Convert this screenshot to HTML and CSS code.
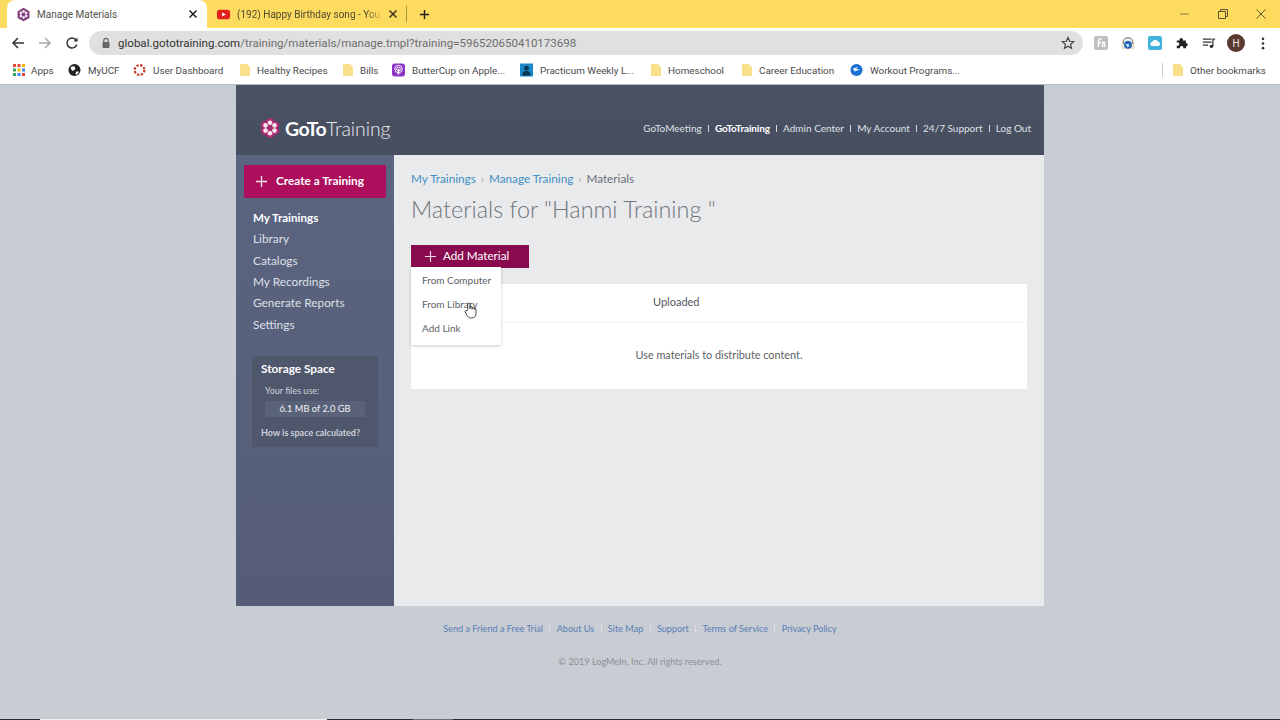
FILE: index.html
```html
<!DOCTYPE html>
<html lang="en">
<head>
<meta charset="utf-8">
<title>Manage Materials</title>
<link rel="stylesheet" href="styles.css">
</head>
<body>
<header class="chrome">
  <div class="tabstrip">
    <div class="tab tab-active">
      <svg class="favicon" viewBox="0 0 16 16"><path d="M8 .8 14.300 4.400V11.600L8 15.200 1.700 11.600V4.400Z" fill="#7d3a79"/><g fill="#f2e4f0"><circle cx="8" cy="4.800" r="1.500"/><circle cx="8" cy="11.200" r="1.500"/><circle cx="5.200" cy="6.400" r="1.500"/><circle cx="10.800" cy="6.400" r="1.500"/><circle cx="5.200" cy="9.600" r="1.500"/><circle cx="10.800" cy="9.600" r="1.500"/></g></svg>
      <span class="tab-title">Manage Materials</span>
      <svg class="tab-x" viewBox="0 0 10 10"><path d="M1.500 1.500 8.500 8.500M8.500 1.500 1.500 8.500" stroke="#222" stroke-width="1.500"/></svg>
    </div>
    <div class="tab tab-idle">
      <svg class="favicon" viewBox="0 0 16 16"><rect x="1" y="3" width="14" height="10" rx="3" fill="#e3211c"/><path d="M6.500 5.800 10.500 8 6.500 10.200Z" fill="#fff"/></svg>
      <span class="tab-title">(192) Happy Birthday song - You</span>
      <svg class="tab-x" viewBox="0 0 10 10"><path d="M1.500 1.500 8.500 8.500M8.500 1.500 1.500 8.500" stroke="#3a3420" stroke-width="1.500"/></svg>
    </div>
    <span class="tab-sep"></span>
    <svg class="tab-new" viewBox="0 0 12 12"><path d="M6 1V11M1 6H11" stroke="#26221a" stroke-width="1.600"/></svg>
    <div class="win-controls">
      <svg viewBox="0 0 12 12"><path d="M1 6H10" stroke="#8a7a45" stroke-width="1"/></svg>
      <svg viewBox="0 0 12 12"><path d="M1.500 3.500H8.500V10.500H1.500ZM3.500 3.500V1.500H10.500V8.500H8.500" fill="none" stroke="#5d5330" stroke-width="1"/></svg>
      <svg viewBox="0 0 12 12"><path d="M1.500 1.500 10.500 10.500M10.500 1.500 1.500 10.500" stroke="#5d5330" stroke-width="1"/></svg>
    </div>
  </div>
  <div class="toolbar">
    <svg class="nav-ico" viewBox="0 0 14 14"><path d="M13 7H2M7 2 2 7l5 5" fill="none" stroke="#333" stroke-width="1.500"/></svg>
    <svg class="nav-ico" viewBox="0 0 14 14"><path d="M1 7H12M7 2l5 5-5 5" fill="none" stroke="#aaa" stroke-width="1.500"/></svg>
    <svg class="nav-ico" viewBox="0 0 14 14"><path d="M11.800 8.500A5 5 0 1 1 10.500 3.400L12 5" fill="none" stroke="#333" stroke-width="1.500"/><path d="M12.500 1.500V5.500H8.500Z" fill="#333"/></svg>
    <div class="omnibox">
      <svg class="lock" viewBox="0 0 10 12"><path d="M2.800 5V3.500a2.200 2.200 0 0 1 4.400 0V5" fill="none" stroke="#666" stroke-width="1.200"/><rect x="1.500" y="5" width="7" height="6" rx="1" fill="#666"/></svg>
      <span class="url"><span class="url-host">global.gototraining.com</span>/training/materials/manage.tmpl?training=596520650410173698</span>
      <svg class="star" viewBox="0 0 14 14"><path d="M7 1.500 8.600 5.300 12.700 5.600 9.600 8.300 10.500 12.300 7 10.200 3.500 12.300 4.400 8.300 1.300 5.600 5.400 5.300Z" fill="none" stroke="#444" stroke-width="1.200"/></svg>
    </div>
    <div class="extensions">
      <span class="ext ext-grey"><svg viewBox="0 0 12 12"><path d="M3.500 10V3.500Q3.500 2 5 2H6.500M2.500 5.500H6M7.500 10V5.500H9.500V10" fill="none" stroke="#fff" stroke-width="1.300"/></svg></span>
      <svg class="ext-svg" viewBox="0 0 16 16"><path d="M2.500 10V7.500a5.500 5.500 0 0 1 11 0V10" fill="none" stroke="#8a8a7a" stroke-width="1.600"/><rect x="1" y="9" width="14" height="6" rx="1.500" fill="#e3e0cf"/><circle cx="8" cy="10" r="4.500" fill="#2467b8"/><path d="M5.500 9h3l1 2-2 2z" fill="#d9e6f5"/></svg>
      <span class="ext ext-blue"><svg viewBox="0 0 12 12"><path d="M3.500 9a2 2 0 0 1-.3-4 3 3 0 0 1 5.700-.4A2.200 2.200 0 0 1 8.700 9Z" fill="#fff"/></svg></span>
      <svg class="ext-svg" viewBox="0 0 16 16"><path d="M2 5H5.300A2 2 0 1 1 9 5H12.500V8A2 2 0 1 1 12.500 12V14H9.500A2 2 0 1 0 5.700 14H2V11A2 2 0 1 0 2 7.500Z" fill="#222"/></svg>
      <svg class="ext-svg" viewBox="0 0 16 16"><path d="M1 3.500H11M1 7H11M1 10.500H7" stroke="#333" stroke-width="1.300"/><path d="M12.500 3.500V11.500" stroke="#222" stroke-width="1.300"/><circle cx="10.800" cy="11.800" r="1.900" fill="#222"/><path d="M12.500 3.500H15" stroke="#222" stroke-width="1.300"/></svg>
      <span class="avatar">H</span>
      <svg class="kebab" viewBox="0 0 4 14"><circle cx="2" cy="2" r="1.400" fill="#333"/><circle cx="2" cy="7" r="1.400" fill="#333"/><circle cx="2" cy="12" r="1.400" fill="#333"/></svg>
    </div>
  </div>
  <nav class="bookmarks">
    <span class="bm bm-apps"><svg class="bm-ico" viewBox="0 0 12 12"><g><rect x="0" y="0" width="3" height="3" fill="#e8453c"/><rect x="4.500" y="0" width="3" height="3" fill="#e8453c"/><rect x="9" y="0" width="3" height="3" fill="#f6b704"/><rect x="0" y="4.500" width="3" height="3" fill="#34a853"/><rect x="4.500" y="4.500" width="3" height="3" fill="#f6b704"/><rect x="9" y="4.500" width="3" height="3" fill="#4285f4"/><rect x="0" y="9" width="3" height="3" fill="#34a853"/><rect x="4.500" y="9" width="3" height="3" fill="#4285f4"/><rect x="9" y="9" width="3" height="3" fill="#e8453c"/></g></svg>Apps</span>
    <span class="bm bm-ucf"><svg class="bm-ico" viewBox="0 0 14 14"><circle cx="7" cy="7" r="6.500" fill="#222"/><path d="M3 3.500 7 3 8 6 5 8 3 6ZM9 8.500l3 .5-2.500 3.500L8 11Z" fill="#fff"/></svg>MyUCF</span>
    <span class="bm bm-dash"><svg class="bm-ico" viewBox="0 0 14 14"><circle cx="7" cy="7" r="5.200" fill="none" stroke="#c0392b" stroke-width="2.400" stroke-dasharray="2.500 1.600"/></svg>User Dashboard</span>
    <span class="bm bm-recipes"><svg class="bm-ico bm-folder" viewBox="0 0 12 14"><path d="M1 1H8L11 4V13H1Z" fill="#fbe08c"/></svg>Healthy Recipes</span>
    <span class="bm bm-bills"><svg class="bm-ico bm-folder" viewBox="0 0 12 14"><path d="M1 1H8L11 4V13H1Z" fill="#fbe08c"/></svg>Bills</span>
    <span class="bm bm-butter"><svg class="bm-ico" viewBox="0 0 14 14"><rect width="14" height="14" rx="3" fill="#8e35c8"/><circle cx="7" cy="6" r="4" fill="none" stroke="#fff" stroke-width="1"/><circle cx="7" cy="6" r="2" fill="none" stroke="#fff" stroke-width="1"/><rect x="6.200" y="6" width="1.600" height="6" rx=".8" fill="#fff"/></svg>ButterCup on Apple...</span>
    <span class="bm bm-prac"><svg class="bm-ico" viewBox="0 0 14 14"><rect width="14" height="14" fill="#1b88c9"/><circle cx="7" cy="5" r="2.600" fill="#0b3550"/><path d="M2.500 13c0-4 2-5 4.500-5s4.500 1 4.500 5Z" fill="#0b3550"/></svg>Practicum Weekly L...</span>
    <span class="bm bm-home"><svg class="bm-ico bm-folder" viewBox="0 0 12 14"><path d="M1 1H8L11 4V13H1Z" fill="#fbe08c"/></svg>Homeschool</span>
    <span class="bm bm-career"><svg class="bm-ico bm-folder" viewBox="0 0 12 14"><path d="M1 1H8L11 4V13H1Z" fill="#fbe08c"/></svg>Career Education</span>
    <span class="bm bm-work"><svg class="bm-ico" viewBox="0 0 14 14"><circle cx="7" cy="7" r="6.500" fill="#1a6fd0"/><path d="M3 5.500 9 3.500 6.500 6 11 6.500 5 8.500Z" fill="#e6f0fb"/></svg>Workout Programs...</span>
    <span class="bm-sep"></span>
    <span class="bm bm-other"><svg class="bm-ico bm-folder" viewBox="0 0 12 14"><path d="M1 1H8L11 4V13H1Z" fill="#fbe08c"/></svg>Other bookmarks</span>
  </nav>
</header>

<div class="site">
  <div class="wrap">
    <div class="masthead">
      <div class="logo">
        <svg class="logo-mark" viewBox="0 0 20 20"><g fill="#b32a72"><circle cx="10" cy="4.300" r="4"/><circle cx="10" cy="15.700" r="4"/><circle cx="5" cy="7.200" r="4"/><circle cx="15" cy="7.200" r="4"/><circle cx="5" cy="12.800" r="4"/><circle cx="15" cy="12.800" r="4"/></g><g fill="#f6e7ef"><circle cx="10" cy="4.800" r="2.300"/><circle cx="10" cy="15.200" r="2.300"/><circle cx="5.500" cy="7.400" r="2.300"/><circle cx="14.500" cy="7.400" r="2.300"/><circle cx="5.500" cy="12.600" r="2.300"/><circle cx="14.500" cy="12.600" r="2.300"/></g><circle cx="10" cy="10" r="1.500" fill="#b32a72"/></svg>
        <span class="logo-text"><b>GoTo</b>Training</span>
      </div>
      <ul class="topnav">
        <li>GoToMeeting</li>
        <li class="current">GoToTraining</li>
        <li>Admin Center</li>
        <li>My Account</li>
        <li>24/7 Support</li>
        <li>Log Out</li>
      </ul>
    </div>
    <div class="columns">
      <aside class="sidebar">
        <a class="create-btn"><svg class="plus" viewBox="0 0 14 14"><path d="M7 1V13M1 7H13" stroke="#f5e3ec" stroke-width="1.400"/></svg>Create a Training</a>
        <ul class="sidenav">
          <li class="on">My Trainings</li>
          <li>Library</li>
          <li>Catalogs</li>
          <li>My Recordings</li>
          <li>Generate Reports</li>
          <li>Settings</li>
        </ul>
        <section class="storage">
          <h3>Storage Space</h3>
          <p class="uses">Your files use:</p>
          <div class="meter">6.1 MB of 2.0 GB</div>
          <p class="how">How is space calculated?</p>
        </section>
      </aside>
      <main class="content">
        <div class="crumbs"><a>My Trainings</a><i>›</i><a>Manage Training</a><i>›</i><span>Materials</span></div>
        <h1>Materials for "Hanmi Training "</h1>
        <div class="add-wrap">
          <a class="add-btn"><svg class="plus" viewBox="0 0 14 14"><path d="M7 1V13M1 7H13" stroke="#f0d8e3" stroke-width="1.300"/></svg>Add Material</a>
          <ul class="menu">
            <li>From Computer</li>
            <li>From Library</li>
            <li>Add Link</li>
          </ul>
          <svg class="cursor" viewBox="0 0 14 18"><path d="M4 8V2.200a1.200 1.200 0 0 1 2.400 0V7l.1-1.200a1.100 1.100 0 0 1 2.200 0V7.500l.1-1a1.100 1.100 0 0 1 2.100 0V8l.1-.6a1 1 0 0 1 1.900 0V12c0 3-1.500 5-4.500 5H7C5 17 4 15.500 3 14L1.200 10.500C.7 9.300 2.400 8.500 3.200 9.500Z" fill="#fff" stroke="#222" stroke-width=".9"/></svg>
        </div>
        <section class="card">
          <div class="card-head"><span>Uploaded</span></div>
          <p class="empty">Use materials to distribute content.</p>
        </section>
      </main>
    </div>
  </div>
  <footer class="foot">
    <ul class="foot-links">
      <li>Send a Friend a Free Trial</li>
      <li>About Us</li>
      <li>Site Map</li>
      <li>Support</li>
      <li>Terms of Service</li>
      <li>Privacy Policy</li>
    </ul>
    <p class="copy">© 2019 LogMeIn, Inc. All rights reserved.</p>
  </footer>
</div>
<div class="video-edge"><span class="seg-a"></span><span class="seg-b"></span><span class="seg-c"></span><span class="seg-d"></span><span class="seg-e"></span></div>
</body>
</html>
```

FILE: styles.css
```css
* { box-sizing: border-box; }
html, body { margin: 0; padding: 0; }
body { width: 1280px; height: 720px; overflow: hidden; position: relative; background: #c8ccd3; font-family: Lato, "Open Sans", sans-serif; }
ul { list-style: none; margin: 0; padding: 0; }
p, h1, h3 { margin: 0; }
svg { display: block; flex: none; }

/* browser chrome */
.chrome { font-family: Roboto, "Open Sans", sans-serif; background: #fff; }
.tabstrip { height: 28px; background: #fddb5f; display: flex; align-items: center; position: relative; }
.tab { height: 28px; display: flex; align-items: center; font-size: 10px; color: #54524c; }
.tab-active { width: 200px; margin-left: 7px; background: #fff; border-radius: 8px 8px 0 0; padding: 0 9px 0 9px; }
.tab-idle { width: 192px; padding: 0 1px 0 9px; color: #4f4a35; }
.favicon { width: 15px; height: 15px; margin-right: 6px; }
.tab-title { flex: 1; white-space: nowrap; }
.tab-idle .tab-title { -webkit-mask-image: linear-gradient(90deg, #000 88%, transparent); mask-image: linear-gradient(90deg, #000 88%, transparent); }
.tab-x { width: 10px; height: 10px; margin-left: 4px; }
.tab-sep { width: 1px; height: 16px; background: #a9973f; margin-left: 7px; }
.tab-new { width: 11px; height: 11px; margin-left: 12px; }
.win-controls { margin-left: auto; display: flex; gap: 26px; padding-right: 13px; }
.win-controls svg { width: 12px; height: 12px; }

.toolbar { height: 29px; display: flex; align-items: center; padding: 1px 0 0 11px; background: #fff; }
.nav-ico { width: 14px; height: 14px; margin-right: 13px; }
.omnibox { width: 994px; height: 24px; margin-left: -3px; background: #e0e0e0; border-radius: 12px; display: flex; align-items: center; padding: 0 8px 0 12px; font-size: 11.55px; color: #6e6e6e; }
.lock { width: 10px; height: 12px; margin-right: 7px; }
.url { flex: 1; white-space: nowrap; }
.url-host { color: #333; }
.star { width: 14px; height: 14px; }
.extensions { display: flex; align-items: center; gap: 13px; margin-left: 11px; }
.ext { width: 14px; height: 14px; border-radius: 2px; display: flex; align-items: center; justify-content: center; }
.ext svg { width: 12px; height: 12px; }
.ext-grey { background: #bfc0c0; }
.ext-blue { background: #3fb3dc; }
.ext-svg { width: 14px; height: 14px; }
.avatar { width: 18px; height: 18px; margin: 0 -2px; border-radius: 50%; background: #5a3a30; color: #f3e9e4; font-size: 10px; display: flex; align-items: center; justify-content: center; }
.kebab { width: 4px; height: 13px; margin-left: 5px; }

.bookmarks { height: 28px; display: flex; align-items: center; font-size: 9.9px; color: #4a4a4a; border-bottom: 1px solid #b9bcc1; padding: 0 0 1px 13px; }
.bm { display: flex; align-items: center; white-space: nowrap; }
.bm-ico { width: 13px; height: 14px; margin-right: 7px; }
.bm-folder { width: 12px; margin-right: 6px; }
.bm-apps { width: 55px; }
.bm-apps .bm-ico { width: 12px; height: 12px; margin-right: 6px; }
.bm-ucf { width: 65px; }
.bm-dash { width: 106px; }
.bm-recipes { width: 103px; }
.bm-bills { width: 50px; }
.bm-butter { width: 128px; }
.bm-prac { width: 130px; }
.bm-home { width: 91px; }
.bm-career { width: 109px; }
.bm-work { width: 110px; }
.bm-sep { width: 1px; height: 14px; background: #c9c9c9; margin-left: 202px; }
.bm-other { margin-left: 9px; }

/* site */
.site { display: flex; flex-direction: column; align-items: center; }
.wrap { width: 808px; }
.masthead { height: 70px; background: linear-gradient(#4a5163, #474e5f); display: flex; align-items: center; justify-content: space-between; padding: 16px 13px 0 24px; }
.logo { display: flex; align-items: center; gap: 5px; }
.logo-mark { width: 20px; height: 20px; }
.logo-text { font-size: 19.5px; font-weight: 300; color: #e8eaee; letter-spacing: -.1px; }
.logo-text b { font-weight: 700; color: #fff; letter-spacing: -.6px; }
.topnav { display: flex; font-size: 10px; color: #dfe2e7; }
.topnav li { display: flex; align-items: center; }
.topnav li + li::before { content: ""; width: 1px; height: 7px; margin: 1px 6.100px 0; background: #d5d8dd; }
.topnav .current { color: #fff; font-weight: 700; letter-spacing: -.12px; }

.columns { display: flex; height: 451px; }
.sidebar { width: 158px; flex: none; background: linear-gradient(#5b6480, #555d76); padding: 10px 8px 0; }
.create-btn { height: 33px; display: flex; align-items: center; background: #ad0f5d; color: #fff; font-size: 11.8px; font-weight: 700; padding: 0 0 3px 11px; }
.create-btn .plus { width: 13px; height: 13px; margin: 2px 8px 0 0; }
.sidenav { margin-top: 8.700px; padding-left: 9px; font-size: 11.85px; color: #dde0e6; }
.sidenav li { height: 21.400px; display: flex; align-items: center; }
.sidenav .on { color: #fff; font-weight: 700; font-size: 11.600px; }
.storage { margin-top: 21px; margin-left: 8px; width: 126px; height: 91px; background: #4f576d; padding: 6px 9px 0; color: #e2e4e9; }
.storage h3 { font-size: 11.800px; font-weight: 700; color: #fff; line-height: 14px; }
.uses { font-size: 9px; line-height: 12px; margin: 9px 0 0 4px; color: #ccd0d8; }
.meter { height: 16px; margin: 4px 4px 0 4px; background: #5a6279; font-size: 9.300px; line-height: 16px; text-align: center; color: #f0f1f4; }
.how { font-size: 9px; line-height: 12px; margin-top: 10px; font-weight: 700; color: #ccd0d8; }

.content { flex: 1; background: #e9eaec; padding: 16px 17px 0; position: relative; }
.crumbs { display: flex; align-items: center; font-size: 11.750px; line-height: 15px; color: #6d7278; }
.crumbs a { color: #3f8fc4; }
.crumbs i { font-style: normal; color: #aaa; margin: 0 5px; font-size: 11px; }
h1 { font-size: 23.400px; font-weight: 300; color: #6f7479; line-height: 30px; margin-top: 8px; }
.add-wrap { position: relative; height: 23px; margin-top: 21px; }
.add-btn { width: 118px; height: 23px; display: flex; align-items: center; background: #8a0a4f; color: #fff; font-size: 11.700px; padding: 0 0 3px 13px; }
.add-btn .plus { width: 13px; height: 13px; margin: 3px 6px 0 0; }
.menu { position: absolute; left: 0; top: 22px; width: 90px; height: 78px; background: #fff; box-shadow: 0 1px 3px rgba(0,0,0,.22); padding: 1px 0 0 11px; font-size: 10px; color: #5d6166; z-index: 2; }
.menu li { height: 24px; display: flex; align-items: center; }
.cursor { position: absolute; left: 53px; top: 57px; width: 13px; height: 17px; z-index: 3; }
.card { margin-top: 16px; height: 105px; background: #fff; }
.card-head { height: 39px; border-bottom: 1px solid #f1f1f1; padding-left: 242px; font-size: 11px; line-height: 36px; color: #54585d; }
.empty { text-align: center; font-size: 10.850px; line-height: 14px; margin-top: 25px; color: #5d6166; }

.foot { padding-top: 17px; font-size: 9.150px; }
.foot-links { display: flex; justify-content: center; color: #5a7fb5; }
.foot-links li { display: flex; align-items: center; }
.foot-links li + li::before { content: ""; width: 1px; height: 7px; margin: 0 6.300px; background: #dfe1e5; }
.copy { text-align: center; color: #8d9096; margin-top: 22px; }

.video-edge { position: absolute; left: 0; right: 0; bottom: 0; height: 1px; display: flex; }
.seg-a { width: 40px; background: #2c2d30; }
.seg-b { width: 287px; background: #eceef0; }
.seg-c { width: 86px; background: #2c2d30; }
.seg-d { width: 40px; background: #6c6e72; }
.seg-e { flex: 1; background: #2c2d30; }
```
